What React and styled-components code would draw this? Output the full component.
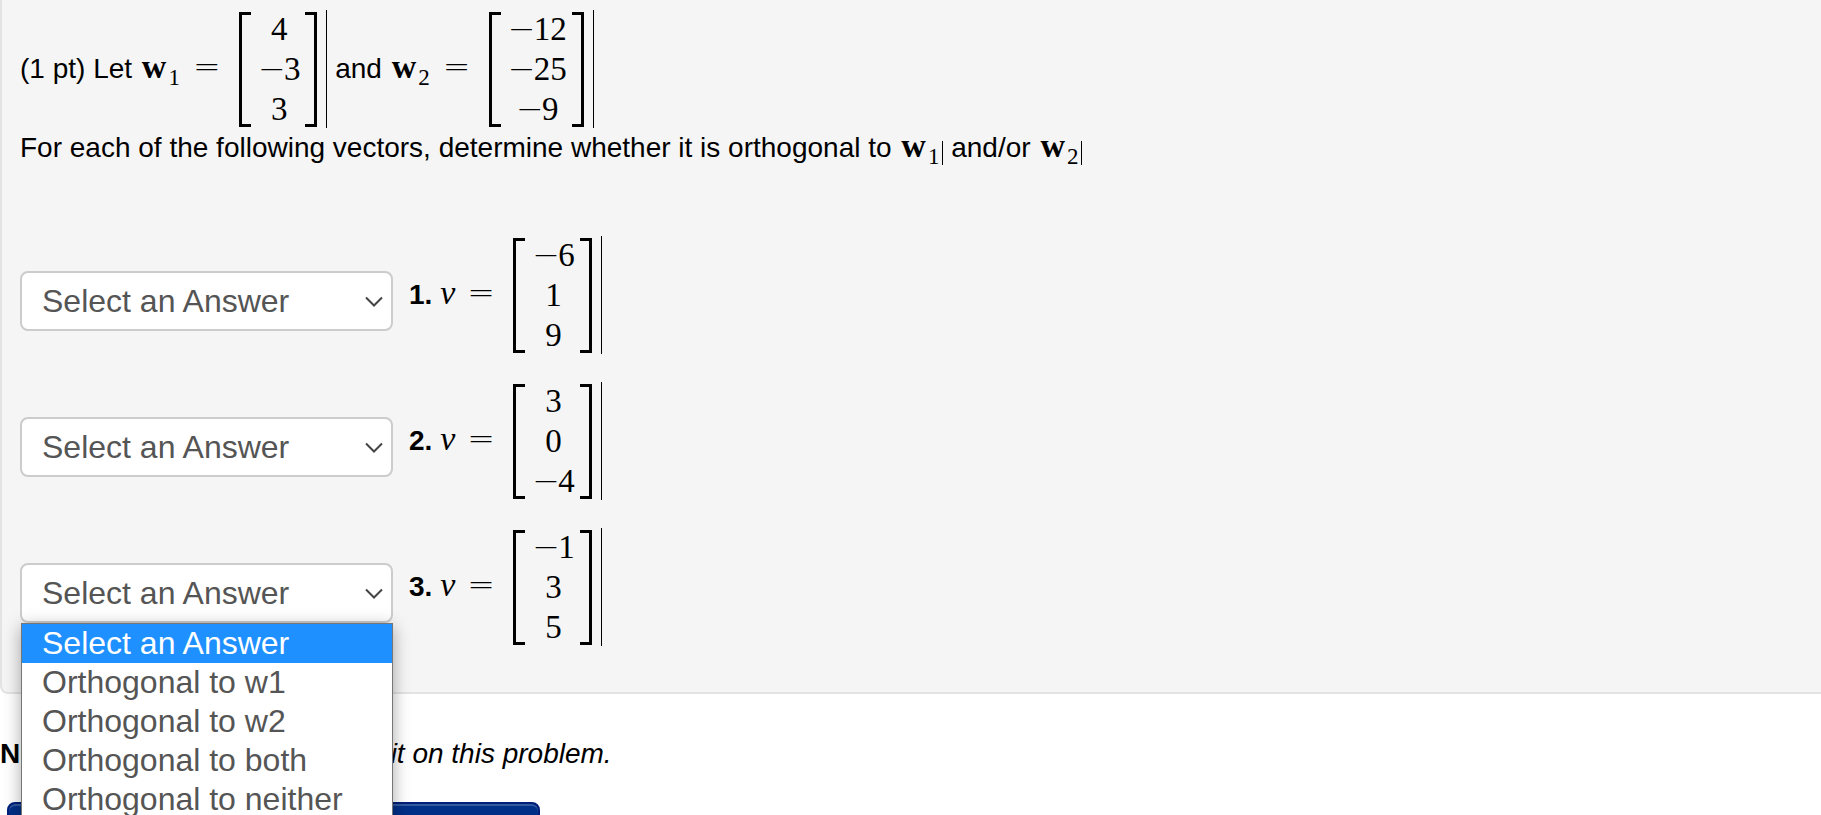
import React, { useState } from 'react'
import styled, { createGlobalStyle } from 'styled-components'

const GlobalStyle = createGlobalStyle`
  * {
    box-sizing: border-box;
  }
  body {
    margin: 0;
    background: #fff;
    color: #000;
    font-family: Arial, 'Liberation Sans', sans-serif;
    font-size: 28px;
    line-height: 40px;
  }
`

const Page = styled.main`
  height: 100vh;
  overflow: hidden;
`

const Problem = styled.section`
  padding: 10px 18px 46px;
  background: #f5f5f5;
  border-left: 2px solid #e3e3e3;
  border-bottom: 2px solid #e3e3e3;
  border-bottom-left-radius: 8px;
`

const Line = styled.div`
  display: flex;
  align-items: center;
  white-space: pre;
`

const Questions = styled.div`
  display: flex;
  flex-direction: column;
  gap: 28px;
  margin-top: 68px;
`

const Question = styled.div`
  display: flex;
  align-items: center;
`

const QuestionLabel = styled.label`
  margin-left: 16px;
  white-space: pre;
`

const SelectBox = styled.div`
  position: relative;
  width: 373px;
  margin-top: 12px;
`

const Select = styled.select`
  display: block;
  appearance: none;
  width: 100%;
  height: 60px;
  padding: 0 50px 0 20px;
  border: 2px solid #ccc;
  border-radius: 8px;
  background: #fff;
  color: #555;
  font-family: inherit;
  font-size: 32px;
  line-height: 40px;
  outline: none;
`

const Chevron = styled.svg`
  position: absolute;
  top: 25px;
  right: 10px;
  width: 18px;
  height: 12px;
  fill: none;
  stroke: #444;
  stroke-width: 2;
  pointer-events: none;
`

const Menu = styled.ul`
  position: absolute;
  z-index: 1;
  top: 100%;
  left: 1px;
  right: 0;
  margin: 0;
  padding: 0;
  list-style: none;
  border: 1px solid #767676;
  background: #fff;
  box-shadow: 0 4px 16px rgba(0, 0, 0, 0.35);
`

const MenuItem = styled.li`
  padding-left: 20px;
  background: ${({ $active }) => ($active ? '#1e90ff' : '#fff')};
  color: ${({ $active }) => ($active ? '#fff' : '#555')};
  font-size: 32px;
  line-height: 39px;
  cursor: default;
`

const MathText = styled.span`
  font-family: 'Times New Roman', 'Liberation Serif', serif;
  font-size: 34px;
  line-height: 0;
`

const VectorName = styled(MathText)`
  margin-left: 2px;
  font-weight: 700;
`

const Variable = styled(MathText)`
  font-style: italic;
`

const Sub = styled.sub`
  margin-left: 2px;
  font-size: 23px;
  font-weight: 400;
  line-height: 0;
  vertical-align: -7px;
`

const Operator = styled.span`
  display: inline-block;
  width: 26px;
  font-family: 'DejaVu Sans', sans-serif;
  font-size: 33px;
  font-weight: 200;
  line-height: 0;
  text-align: center;
`

const Equals = styled(Operator)`
  margin: 0 20px 0 ${({ $before }) => $before}px;
`

const MatrixBox = styled.span`
  display: flex;
  align-items: center;
  height: 118px;
  padding-right: 9px;
  border-right: 1px solid #000;
`

const Bracket = styled.span`
  width: 12px;
  height: 115px;
  border: 3px solid #000;
  border-${({ $side }) => ($side === 'left' ? 'right' : 'left')}: 0;
`

const Column = styled.span`
  display: flex;
  flex-direction: column;
  align-items: center;
  padding: 0 5px 0 7px;
  font-family: 'Times New Roman', 'Liberation Serif', serif;
  font-size: 33px;
  line-height: 40px;
`

const Caret = styled.span`
  display: inline-block;
  height: 24px;
  margin-left: 3px;
  border-right: 1px solid #000;
  vertical-align: -8px;
`

const Note = styled.p`
  margin: 40px 0 28px;
`

const SubmitButton = styled.button`
  display: block;
  width: 533px;
  height: 60px;
  margin-left: 7px;
  border: 2px solid #001f7a;
  border-radius: 8px;
  background: linear-gradient(#003088, #002a80);
  box-shadow: inset 0 2px 0 rgba(255, 255, 255, 0.2);
`

const answers = [
  'Select an Answer',
  'Orthogonal to w1',
  'Orthogonal to w2',
  'Orthogonal to both',
  'Orthogonal to neither',
]

const questions = [
  [-6, 1, 9],
  [3, 0, -4],
  [-1, 3, 5],
]

function Vector({ index }) {
  return (
    <VectorName>
      w<Sub>{index}</Sub>
    </VectorName>
  )
}

function Matrix({ values }) {
  return (
    <MatrixBox>
      <Bracket $side="left" />
      <Column>
        {values.map((value, i) => (
          <span key={i}>
            {value < 0 && <Operator>−</Operator>}
            {Math.abs(value)}
          </span>
        ))}
      </Column>
      <Bracket $side="right" />
    </MatrixBox>
  )
}

function AnswerSelect({ id, open, onToggle }) {
  const [answer, setAnswer] = useState(answers[0])

  return (
    <SelectBox>
      <Select
        id={id}
        value={answer}
        onChange={(e) => setAnswer(e.target.value)}
        onMouseDown={(e) => {
          e.preventDefault()
          onToggle()
        }}
      >
        {answers.map((text) => (
          <option key={text}>{text}</option>
        ))}
      </Select>
      <Chevron viewBox="0 0 18 12">
        <path d="M1 1.5 9 9.5 17 1.5" />
      </Chevron>
      {open && (
        <Menu>
          {answers.map((text) => (
            <MenuItem
              key={text}
              $active={text === answer}
              onClick={() => {
                setAnswer(text)
                onToggle()
              }}
            >
              {text}
            </MenuItem>
          ))}
        </Menu>
      )}
    </SelectBox>
  )
}

function App() {
  const [openIndex, setOpenIndex] = useState(2)

  return (
    <>
      <GlobalStyle />
      <Page>
        <Problem>
          <Line>
            <span>
              (1 pt) Let <Vector index={1} />
              <Equals $before={13}>=</Equals>
            </span>
            <Matrix values={[4, -3, 3]} />
            <span>
              {' '}and <Vector index={2} />
              <Equals $before={13}>=</Equals>
            </span>
            <Matrix values={[-12, -25, -9]} />
          </Line>
          <div>
            For each of the following vectors, determine whether it is orthogonal to{' '}
            <Vector index={1} />
            <Caret /> and/or <Vector index={2} />
            <Caret />
          </div>

          <Questions>
            {questions.map((values, i) => (
              <Question key={i}>
                <AnswerSelect
                  id={`answer-${i}`}
                  open={openIndex === i}
                  onToggle={() => setOpenIndex(openIndex === i ? -1 : i)}
                />
                <QuestionLabel htmlFor={`answer-${i}`}>
                  <b>{i + 1}.</b> <Variable>v</Variable>
                  <Equals $before={12}>=</Equals>
                </QuestionLabel>
                <Matrix values={values} />
              </Question>
            ))}
          </Questions>
        </Problem>

        <Note>
          <b>Note:</b> <i>You can earn partial credit on this problem.</i>
        </Note>
        <SubmitButton type="button" aria-label="Submit" />
      </Page>
    </>
  )
}

export default App
